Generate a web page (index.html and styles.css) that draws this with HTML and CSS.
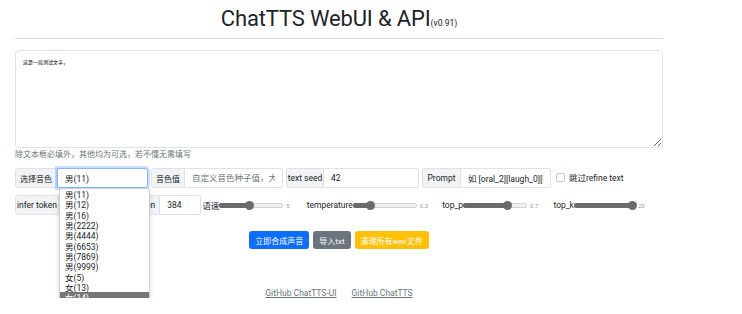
FILE: index.html
```html
<!doctype html>
<html lang="zh">
    <head>
        <meta charset="UTF-8" />
        <meta name="viewport" content="width=device-width, initial-scale=1.0" />
        <title>ChatTTS WebUI & API</title>
        <link rel="stylesheet" href="styles.css">
    </head>
    <body>
        <div class="container">
            <h1>ChatTTS WebUI &amp; API<span class="ver">(v0.91)</span></h1>
            <hr />

            <textarea class="text-box">这是一段测试文字，</textarea>
            <div class="hint">除文本框必填外，其他均为可选，若不懂无需填写</div>

            <div class="row row-one">
                <div class="group">
                    <span class="label cjk lw-voice">选择音色</span>
                    <div class="select focus">男(11)</div>
                </div>
                <div class="group">
                    <span class="label cjk lw-seed">音色值</span>
                    <input class="field w-seed" type="text" placeholder="自定义音色种子值，大于0" />
                </div>
                <div class="group">
                    <span class="label lw-text">text seed</span>
                    <input class="field w-text" type="text" value="42" />
                </div>
                <div class="group">
                    <span class="label lw-prompt">Prompt</span>
                    <input class="field w-prompt" type="text" value="如 [oral_2][laugh_0][break_6]" />
                </div>
                <label class="check">
                    <span class="box"></span>跳过refine text
                </label>
            </div>

            <div class="row row-two">
                <div class="group">
                    <span class="label lw-infer">infer token</span>
                    <input class="field w-mid mid" type="text" value="2048" />
                    <span class="label mid">refine token</span>
                    <input class="field w-small" type="text" value="384" />
                </div>
                <div class="slider-box s-speed">
                    <span class="s-label">语速</span>
                    <div class="track"><div class="fill" style="width: 50%"></div></div>
                    <span class="s-val">5</span>
                </div>
                <div class="slider-box s-temp">
                    <span class="s-label">temperature</span>
                    <div class="track"><div class="fill" style="width: 30%"></div></div>
                    <span class="s-val">0.3</span>
                </div>
                <div class="slider-box s-topp">
                    <span class="s-label">top_p</span>
                    <div class="track"><div class="fill" style="width: 73%"></div></div>
                    <span class="s-val">0.7</span>
                </div>
                <div class="slider-box s-topk">
                    <span class="s-label">top_k</span>
                    <div class="track"><div class="fill" style="width: 100%"></div></div>
                    <span class="s-val">20</span>
                </div>
            </div>

            <div class="buttons">
                <button class="btn btn-blue">立即合成声音</button>
                <button class="btn btn-gray">导入txt</button>
                <button class="btn btn-yellow">清理所有wav文件</button>
            </div>

            <div class="footer">
                <a href="#">GitHub ChatTTS-UI</a>
                <a href="#">GitHub ChatTTS</a>
            </div>

            <!-- раскрытый список селекта -->
            <ul class="dropdown">
                <li>男(11)</li>
                <li>男(12)</li>
                <li>男(16)</li>
                <li>男(2222)</li>
                <li>男(4444)</li>
                <li>男(6653)</li>
                <li>男(7869)</li>
                <li>男(9999)</li>
                <li>女(5)</li>
                <li>女(13)</li>
                <li class="active">女(14)</li>
                <li>女(1111)</li>
            </ul>
        </div>
    </body>
</html>
```

FILE: styles.css
```css
body {
    font-family: Roboto, "Noto Sans CJK SC", sans-serif;
    background-color: #fff;
    color: #212529;
    margin: 0;
    padding: 0;
    font-size: 8.5px;
    overflow: hidden;
}
.container {
    position: relative;
    width: 648px;
    margin-left: 15px;
}
h1 {
    margin: 0;
    padding-top: 4px;
    height: 30px;
    text-align: center;
    font-size: 22px;
    font-weight: 400;
    letter-spacing: -0.15px;
    line-height: 30px;
    color: #212529;
}
.ver {
    font-size: 8.5px;
    letter-spacing: 0;
}
hr {
    margin: 4px 0 0 0;
    border: none;
    border-top: 1px solid #dcdcdc;
}
.text-box {
    display: block;
    box-sizing: border-box;
    width: 648px;
    height: 98px;
    margin-top: 11px;
    padding: 7px 7px;
    border: 1px solid #dee2e6;
    border-radius: 4px;
    font-family: inherit;
    font-size: 5px;
    color: #000;
    resize: vertical;
}
.hint {
    margin-top: 1px;
    color: #6c757d;
    font-size: 8px;
    line-height: 12px;
}
.row {
    display: flex;
    align-items: center;
}
.row-one {
    margin-top: 7px;
    gap: 3px;
}
.row-two {
    margin-top: 7px;
}
.group {
    display: flex;
    height: 20px;
}
.label {
    box-sizing: border-box;
    display: flex;
    align-items: center;
    justify-content: center;
    padding: 0 4px;
    background-color: #f1f3f5;
    border: 1px solid #dee2e6;
    border-radius: 3px 0 0 3px;
    white-space: nowrap;
}
.label.cjk {
    font-size: 8px;
}
.lw-voice { width: 42px; }
.lw-seed { width: 34px; }
.lw-text { width: 38px; }
.lw-prompt { width: 39px; }
.lw-infer { width: 44px; }
.group .field,
.group .select {
    box-sizing: border-box;
    height: 20px;
    padding: 0 7px;
    border: 1px solid #dee2e6;
    border-left: none;
    border-radius: 0 3px 3px 0;
    font-family: inherit;
    font-size: 8.5px;
    color: #212529;
    background: #fff;
    outline: none;
}
.field::placeholder {
    color: #6c757d;
}
.select {
    display: flex;
    align-items: center;
    width: 91px;
}
.select.focus {
    border: 1px solid #86b7fe;
    box-shadow: 0 0 0 2px rgba(13, 110, 253, 0.22);
}
.w-seed { width: 98px; }
.w-text { width: 95px; }
.w-prompt { width: 90px; }
.w-mid { width: 47px; }
.w-small { width: 41px; }
.group .mid {
    border-radius: 0;
}
.check {
    display: flex;
    align-items: center;
    gap: 4px;
    margin-left: 2px;
    margin-top: -2px;
}
.check .box {
    width: 7px;
    height: 7px;
    border: 1px solid #c8c8c8;
    border-radius: 2px;
}
.slider-box {
    display: flex;
    align-items: center;
    height: 20px;
}
.s-label {
    white-space: nowrap;
}
.track {
    position: relative;
    height: 3px;
    border: 1px solid #d4d4d4;
    border-radius: 2px;
    background-color: #f0f0f0;
}
.fill {
    position: relative;
    height: 5px;
    margin-top: -1px;
    margin-left: -1px;
    background-color: #6b6b6b;
    border-radius: 2px;
}
.fill::after {
    content: "";
    position: absolute;
    right: -4px;
    top: -2px;
    width: 9px;
    height: 9px;
    border-radius: 50%;
    background-color: #6b6b6b;
}
.s-val {
    margin-left: 3px;
    font-size: 6px;
    color: #9a9a9a;
}
.s-speed { margin-left: 1px; }
.s-speed .track { width: 62px; }
.s-temp { margin-left: 17px; }
.s-temp .track { width: 62px; }
.s-topp { margin-left: 14px; }
.s-topp .track { width: 62px; }
.s-topk { margin-left: 15px; }
.s-topk .track { width: 59px; }
.buttons {
    display: flex;
    justify-content: center;
    gap: 4px;
    margin-top: 16px;
}
.btn {
    height: 18px;
    padding: 0 6px;
    border: none;
    border-radius: 3px;
    font-family: inherit;
    font-size: 8px;
    color: #fff;
}
.btn-blue { background-color: #0d6efd; }
.btn-gray { background-color: #6c757d; }
.btn-yellow { background-color: #ffc107; }
.footer {
    display: flex;
    justify-content: center;
    gap: 15px;
    margin-top: 39px;
}
.footer a {
    color: #6c757d;
    font-size: 8.5px;
}
.dropdown {
    position: absolute;
    left: 44px;
    top: 188px;
    width: 89px;
    height: 126px;
    margin: 0;
    padding: 0;
    overflow: hidden;
    list-style: none;
    background-color: #fff;
    border: 1px solid #d0d0d0;
    border-bottom: none;
    border-radius: 3px 3px 0 0;
    box-shadow: 0 2px 5px rgba(0, 0, 0, 0.15);
}
.dropdown li {
    display: flex;
    align-items: center;
    height: 10.3px;
    padding-left: 5px;
    font-size: 8.5px;
}
.dropdown li.active {
    background-color: #777;
    color: #fff;
}
```
